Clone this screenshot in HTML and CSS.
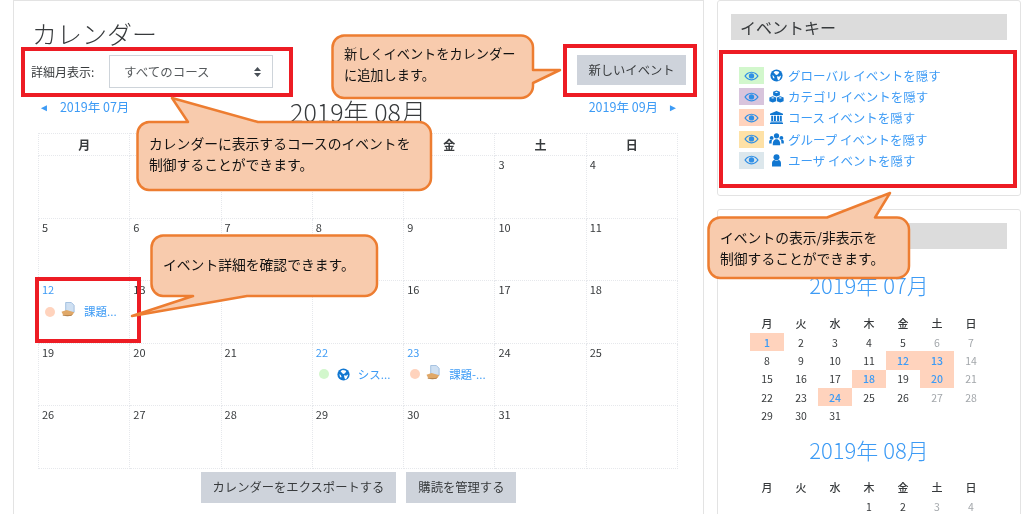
FILE: index.html
```html
<!DOCTYPE html>
<html lang="ja">
<head>
    <meta charset="UTF-8">
    <title>カレンダー</title>
    <link rel="stylesheet" href="styles.css">
</head>
<body>
    <svg class="icon-defs" width="0" height="0">
        <symbol id="i-eye" viewBox="0 0 24 16">
            <path d="M12 1C6.5 1 2.5 4.500 .5 8c2 3.500 6 7 11.500 7s9.500-3.500 11.500-7C21.500 4.500 17.500 1 12 1zm0 12.200C7.800 13.200 4.800 11 3 8c1.800-3 4.800-5.200 9-5.200S19.200 5 21 8c-1.800 3-4.800 5.200-9 5.200z"/>
            <circle cx="12" cy="7.800" r="4.300"/>
        </symbol>
        <symbol id="i-globe" viewBox="0 0 16 16">
            <circle cx="8" cy="8" r="7.500"/>
            <path fill="#fff" d="M7 2.500 10.500 3 11.500 5 9.500 6 9 7.500 7 7 6 5.500 4.500 5 5 3.500zM8.500 9l3 .5L12.500 8l1 1-1.500 3.500-2 1.500-1-2.500zM3 7.500l1.500 1 1 2-.5 1.500L3.500 10.500z"/>
        </symbol>
        <symbol id="i-cubes" viewBox="0 0 20 16">
            <path d="M10 0l4.500 1.800v4.400L10 8 5.500 6.200V1.800zM5 7.500l4.500 1.800v4.900L5 16 .5 14.200V9.300zM15 7.500l4.500 1.800v4.900L15 16l-4.500-1.800V9.300z"/>
            <path fill="#fff" d="M10 1.500 7.500 2.400 10 3.300l2.500-.9zM5 9 2.500 9.900 5 10.800l2.500-.9zM15 9l-2.500.9 2.500.9 2.500-.9z"/>
        </symbol>
        <symbol id="i-bank" viewBox="0 0 16 16">
            <path d="M8 0l8 3.500V5H0V3.500zM1.500 5.800h2.400v6.400H1.500zM4.900 5.800h2.400v6.400H4.900zM8.700 5.800h2.400v6.400H8.700zM12.100 5.800h2.400v6.400h-2.400zM.8 12.800h14.400v1.400H.8zM0 14.600h16V16H0z"/>
        </symbol>
        <symbol id="i-users" viewBox="0 0 18 16">
            <circle cx="9" cy="3.500" r="3.200"/>
            <circle cx="3" cy="6" r="2.400"/>
            <circle cx="15" cy="6" r="2.400"/>
            <path d="M4.500 15c-.5-4 1.200-7.300 4.500-7.300s5 3.300 4.500 7.300zM0 13V10.500C0 9 1 8.500 3.500 8.800 3 10 2.900 11.500 3 13zM18 13V10.500C18 9 17 8.500 14.500 8.800c.5 1.200.6 2.700.5 4.200z"/>
        </symbol>
        <symbol id="i-user" viewBox="0 0 12 16">
            <circle cx="6" cy="4" r="3.700"/>
            <path d="M.5 15.500V11c0-2.200 1.300-3.500 2.800-3.700C4 8 5 8.300 6 8.300s2-.3 2.700-1c1.500.2 2.800 1.500 2.800 3.700v4.500z"/>
        </symbol>
        <symbol id="i-assign" viewBox="0 0 16 16">
            <path fill="#cfe0f2" stroke="#8fb2d8" stroke-width=".8" d="M5 .5h6l3 3v7.500H5z"/>
            <path fill="#e0a868" d="M.5 10.500 6 8.500l8 2.500-1.500 2.500c-2.500 1.500-7 1.500-10 .5z"/>
            <path fill="#a8743c" d="M1.500 13.500c3 1 7 1 10.500-.3l-.5 1.300c-3 1-7 .8-9.500-.1z"/>
        </symbol>
    </svg>

    <div class="page">
        <main class="main-card">
            <h1 class="page-title">カレンダー</h1>

            <div class="toolbar">
                <div class="month-filter">
                    <label class="filter-label">詳細月表示:</label>
                    <div class="fake-select">
                        <span>すべてのコース</span>
                        <svg class="select-arrows" width="7" height="10" viewBox="0 0 7 10"><path d="M3.500 0 7 4H0zM3.500 10 0 6h7z"/></svg>
                    </div>
                </div>
                <a class="btn btn-new">新しいイベント</a>
            </div>

            <div class="month-nav">
                <a class="nav-link"><span class="nav-arrow">◄</span>2019年 07月</a>
                <h2 class="month-title">2019年 08月</h2>
                <a class="nav-link"><span>2019年 09月</span><span class="nav-arrow nav-arrow-right">►</span></a>
            </div>

            <table class="month-table">
                <thead>
                    <!-- 火 水 木 sit under the callout -->
                    <tr><th>月</th><th></th><th></th><th></th><th>金</th><th>土</th><th>日</th></tr>
                </thead>
                <tbody>
                    <tr><td></td><td></td><td></td><td></td><td></td><td>3</td><td>4</td></tr>
                    <tr><td>5</td><td>6</td><td>7</td><td>8</td><td>9</td><td>10</td><td>11</td></tr>
                    <tr>
                        <td><a class="day-link">12</a>
                            <div class="event"><span class="dot dot-course"></span><svg class="ev-icon"><use href="#i-assign"/></svg><a class="ev-name">課題...</a></div>
                        </td>
                        <td>13</td><td></td><td></td><td>16</td><td>17</td><td>18</td>
                    </tr>
                    <tr>
                        <td>19</td><td>20</td><td>21</td>
                        <td><a class="day-link">22</a>
                            <div class="event"><span class="dot dot-global"></span><svg class="ev-icon ev-globe"><use href="#i-globe"/></svg><a class="ev-name">シス...</a></div>
                        </td>
                        <td><a class="day-link">23</a>
                            <div class="event"><span class="dot dot-course"></span><svg class="ev-icon"><use href="#i-assign"/></svg><a class="ev-name">課題-...</a></div>
                        </td>
                        <td>24</td><td>25</td>
                    </tr>
                    <tr><td>26</td><td>27</td><td>28</td><td>29</td><td>30</td><td>31</td><td></td></tr>
                </tbody>
            </table>

            <div class="bottom-buttons">
                <a class="btn">カレンダーをエクスポートする</a>
                <a class="btn">購読を管理する</a>
            </div>
        </main>

        <aside class="sidebar">
            <section class="block block-key">
                <h3 class="block-title">イベントキー</h3>
                <ul class="key-list">
                    <li><span class="swatch sw-global"><svg><use href="#i-eye"/></svg></span><svg class="key-icon"><use href="#i-globe"/></svg><a>グローバル イベントを隠す</a></li>
                    <li><span class="swatch sw-category"><svg><use href="#i-eye"/></svg></span><svg class="key-icon"><use href="#i-cubes"/></svg><a>カテゴリ イベントを隠す</a></li>
                    <li><span class="swatch sw-course"><svg><use href="#i-eye"/></svg></span><svg class="key-icon"><use href="#i-bank"/></svg><a>コース イベントを隠す</a></li>
                    <li><span class="swatch sw-group"><svg><use href="#i-eye"/></svg></span><svg class="key-icon"><use href="#i-users"/></svg><a>グループ イベントを隠す</a></li>
                    <li><span class="swatch sw-user"><svg><use href="#i-eye"/></svg></span><svg class="key-icon"><use href="#i-user"/></svg><a>ユーザ イベントを隠す</a></li>
                </ul>
            </section>

            <section class="block block-months">
                <div class="block-title"></div>

                <h4 class="mini-title">2019年 07月</h4>
                <table class="mini-table">
                    <thead><tr><th>月</th><th>火</th><th>水</th><th>木</th><th>金</th><th>土</th><th>日</th></tr></thead>
                    <tbody>
                        <tr><td class="has-event">1</td><td>2</td><td>3</td><td>4</td><td>5</td><td class="weekend">6</td><td class="weekend">7</td></tr>
                        <tr><td>8</td><td>9</td><td>10</td><td>11</td><td class="has-event">12</td><td class="has-event">13</td><td class="weekend">14</td></tr>
                        <tr><td>15</td><td>16</td><td>17</td><td class="has-event">18</td><td>19</td><td class="has-event">20</td><td class="weekend">21</td></tr>
                        <tr><td>22</td><td>23</td><td class="has-event">24</td><td>25</td><td>26</td><td class="weekend">27</td><td class="weekend">28</td></tr>
                        <tr><td>29</td><td>30</td><td>31</td><td></td><td></td><td></td><td></td></tr>
                    </tbody>
                </table>

                <h4 class="mini-title mini-title-next">2019年 08月</h4>
                <table class="mini-table mini-table-next">
                    <thead><tr><th>月</th><th>火</th><th>水</th><th>木</th><th>金</th><th>土</th><th>日</th></tr></thead>
                    <tbody>
                        <tr><td></td><td></td><td></td><td>1</td><td>2</td><td class="weekend">3</td><td class="weekend">4</td></tr>
                    </tbody>
                </table>
            </section>
        </aside>
    </div>

    <!-- annotations drawn over the screenshot -->
    <div class="red-box red-filter"></div>
    <div class="red-box red-new"></div>
    <div class="red-box red-key"></div>
    <div class="red-box red-event"></div>

    <div class="callout callout-new">
        <svg class="callout-shape" width="232" height="66">
            <path d="M13 1.500H190a12 12 0 0 1 12 12V36H229L202 49V52a12 12 0 0 1-12 12H13A12 12 0 0 1 1.500 52V13.500A12 12 0 0 1 13 1.500z"/>
        </svg>
        <p>新しくイベントをカレンダー<br>に追加します。</p>
    </div>
    <div class="callout callout-filter">
        <svg class="callout-shape" width="298" height="96">
            <path d="M36 2 122 26H283a12 12 0 0 1 12 12V82a12 12 0 0 1-12 12H13A12 12 0 0 1 1.500 82V38A12 12 0 0 1 13 26H52z"/>
        </svg>
        <p>カレンダーに表示するコースのイベントを<br>制御することができます。</p>
    </div>
    <div class="callout callout-detail">
        <svg class="callout-shape" width="250" height="84">
            <path d="M33 1.500H235a12 12 0 0 1 12 12V50a12 12 0 0 1-12 12H117L2 82 63 62H33A12 12 0 0 1 21.500 50V13.500A12 12 0 0 1 33 1.500z"/>
        </svg>
        <p>イベント詳細を確認できます。</p>
    </div>
    <div class="callout callout-key">
        <svg class="callout-shape" width="204" height="90">
            <path d="M13 27.500H120L183 3 168 27.500H190a12 12 0 0 1 12 12V76a12 12 0 0 1-12 12H13A12 12 0 0 1 1.500 76V39.500A12 12 0 0 1 13 27.500z"/>
        </svg>
        <p>イベントの表示/非表示を<br>制御することができます。</p>
    </div>
</body>
</html>
```

FILE: styles.css
```css
html, body {
    margin: 0;
    height: 514px;
    overflow: hidden;
}

body {
    position: relative;
    background-color: #fff;
    color: #373a3c;
    font-family: "Noto Sans CJK JP", "Liberation Sans", sans-serif;
    font-size: 12px;
    filter: blur(0.35px);
}

a {
    color: #3d9bf5;
    text-decoration: none;
}

h1, h2, h3, h4, p, ul {
    margin: 0;
    padding: 0;
    font-weight: 400;
}

.icon-defs {
    position: absolute;
}

.page {
    display: flex;
    gap: 13px;
    padding-left: 13px;
}

/* main calendar card */
.main-card {
    box-sizing: border-box;
    width: 691px;
    height: 530px;
    padding: 0 17px;
    border: 1px solid #e3e3e3;
}

.page-title {
    box-sizing: border-box;
    height: 54px;
    padding-top: 12px;
    padding-left: 1px;
    font-size: 25px;
    line-height: 40px;
    font-weight: 300;
}

.toolbar {
    display: flex;
    justify-content: space-between;
    height: 33px;
}

.month-filter {
    display: flex;
    align-items: center;
    gap: 13px;
}

.filter-label {
    width: 65px;
    font-size: 12px;
    white-space: nowrap;
}

.fake-select {
    box-sizing: border-box;
    display: flex;
    justify-content: space-between;
    align-items: center;
    width: 164px;
    height: 33px;
    padding: 0 11px 0 14px;
    border: 1px solid #ced4da;
    font-size: 12.500px;
    color: #55595c;
}

.select-arrows {
    fill: #495057;
}

.btn {
    display: inline-flex;
    align-items: center;
    justify-content: center;
    background-color: #ced3db;
    color: #373a3c;
    font-size: 12.300px;
    height: 31px;
    padding: 0 12px;
    white-space: nowrap;
}

.btn-new {
    box-sizing: border-box;
    height: 30px;
    width: 109px;
    padding: 0;
}

.month-nav {
    display: flex;
    justify-content: space-between;
    height: 45px;
    margin: 0 8px 0 7px;
}

.nav-link {
    font-size: 12.500px;
    padding-top: 10px;
    line-height: 17px;
}

.nav-arrow {
    font-size: 10px;
    margin: 0 11px 0 1px;
    vertical-align: 1px;
}

.nav-arrow-right {
    margin: 0 0 0 10px;
}

.month-title {
    font-size: 25px;
    font-weight: 300;
    line-height: 30px;
    padding-top: 8px;
    padding-right: 2px;
}

.month-table {
    width: 640px;
    margin: 0 8px 0 7px;
    border-collapse: collapse;
    table-layout: fixed;
}

.month-table th,
.month-table td {
    border: 1px dotted #e6e8ec;
}

.month-table th {
    height: 21px;
    padding: 0;
    font-size: 12px;
    font-weight: 700;
}

.month-table td {
    height: 60.500px;
    padding: 1px 3px 0;
    vertical-align: top;
    font-size: 11px;
    line-height: 15px;
}

.event {
    display: flex;
    align-items: center;
    height: 18px;
    margin-top: 5.500px;
    padding-left: 3px;
}

.dot {
    flex: none;
    width: 10px;
    height: 10px;
    border-radius: 50%;
}

.dot-course {
    background-color: #ffd3bd;
}

.dot-global {
    background-color: #d2f7cc;
}

.ev-icon {
    flex: none;
    width: 15px;
    height: 15px;
    margin: -4px 0 0 6px;
}

.ev-globe {
    width: 13px;
    height: 13px;
    margin: 0 0 0 8px;
    fill: #1177d1;
}

.ev-name {
    margin-left: 8px;
    font-size: 11.500px;
    white-space: nowrap;
}

.bottom-buttons {
    display: flex;
    justify-content: center;
    gap: 10px;
    margin-top: 3px;
}

/* right column */
.sidebar {
    width: 304px;
}

.block {
    box-sizing: border-box;
    padding: 13px 13px 0;
    border: 1px solid #e3e3e3;
    border-radius: 3px;
}

.block-key {
    height: 196px;
    margin-bottom: 13px;
}

.block-months {
    height: 320px;
}

.block-title {
    height: 26px;
    padding-left: 9px;
    background-color: #dcdcdc;
    font-size: 16px;
    line-height: 26px;
}

.key-list {
    list-style: none;
    margin-top: 25px;
    padding-left: 8px;
}

.key-list li {
    display: flex;
    align-items: center;
    height: 21.200px;
}

.key-list a {
    font-size: 12.500px;
    white-space: nowrap;
}

.swatch {
    display: flex;
    align-items: center;
    justify-content: center;
    width: 25px;
    height: 17px;
    fill: #2f8fe6;
}

.swatch svg {
    width: 15px;
    height: 10px;
}

.key-icon {
    width: 15px;
    height: 13px;
    margin: 0 4px 0 5px;
    fill: #1177d1;
}

.sw-global { background-color: #d2f7cc; }
.sw-category { background-color: #d8c4dc; }
.sw-course { background-color: #ffd3bd; }
.sw-group { background-color: #fee1a6; }
.sw-user { background-color: #dce7ec; }

.mini-title {
    margin-top: 20px;
    text-align: center;
    color: #3d9bf5;
    font-size: 22px;
    line-height: 30px;
    font-weight: 300;
}

.mini-title-next {
    margin-top: 10px;
}

.mini-table {
    width: 238px;
    margin: 14px auto 0;
    border-collapse: collapse;
    table-layout: fixed;
    font-size: 10.500px;
    text-align: center;
}

.mini-table-next {
    margin-top: 13px;
}

.mini-table th {
    height: 20px;
    padding: 0;
    font-size: 11px;
    font-weight: 500;
}

.mini-table td {
    height: 18.300px;
    padding: 0;
}

.mini-table .weekend {
    color: #a3a7ab;
}

.mini-table .has-event {
    background-color: #ffd3bd;
    color: #3d9bf5;
    font-weight: 500;
}

/* annotations */
.red-box {
    position: absolute;
    box-sizing: border-box;
    border: 4px solid #ed1c24;
}

.red-filter { left: 21px; top: 47px; width: 272px; height: 50px; }
.red-new { left: 563px; top: 44px; width: 134px; height: 53px; }
.red-key { left: 719px; top: 50px; width: 298px; height: 138px; }
.red-event { left: 35px; top: 277px; width: 106px; height: 66px; }

.callout {
    position: absolute;
}

.callout-shape {
    display: block;
    fill: #f8cbad;
    stroke: #ed7d31;
    stroke-width: 2.500;
    stroke-linejoin: round;
}

.callout p {
    position: absolute;
    color: #111;
    font-size: 13.800px;
    line-height: 21px;
    white-space: nowrap;
}

.callout-new { left: 331px; top: 34px; }
.callout-new p { left: 13px; top: 9px; font-size: 13.200px; }

.callout-filter { left: 136px; top: 96px; }
.callout-filter p { left: 13px; top: 37px; }

.callout-detail { left: 130px; top: 234px; }
.callout-detail p { left: 33px; top: 20px; }

.callout-key { left: 707px; top: 190px; }
.callout-key p { left: 13px; top: 37px; }
```
